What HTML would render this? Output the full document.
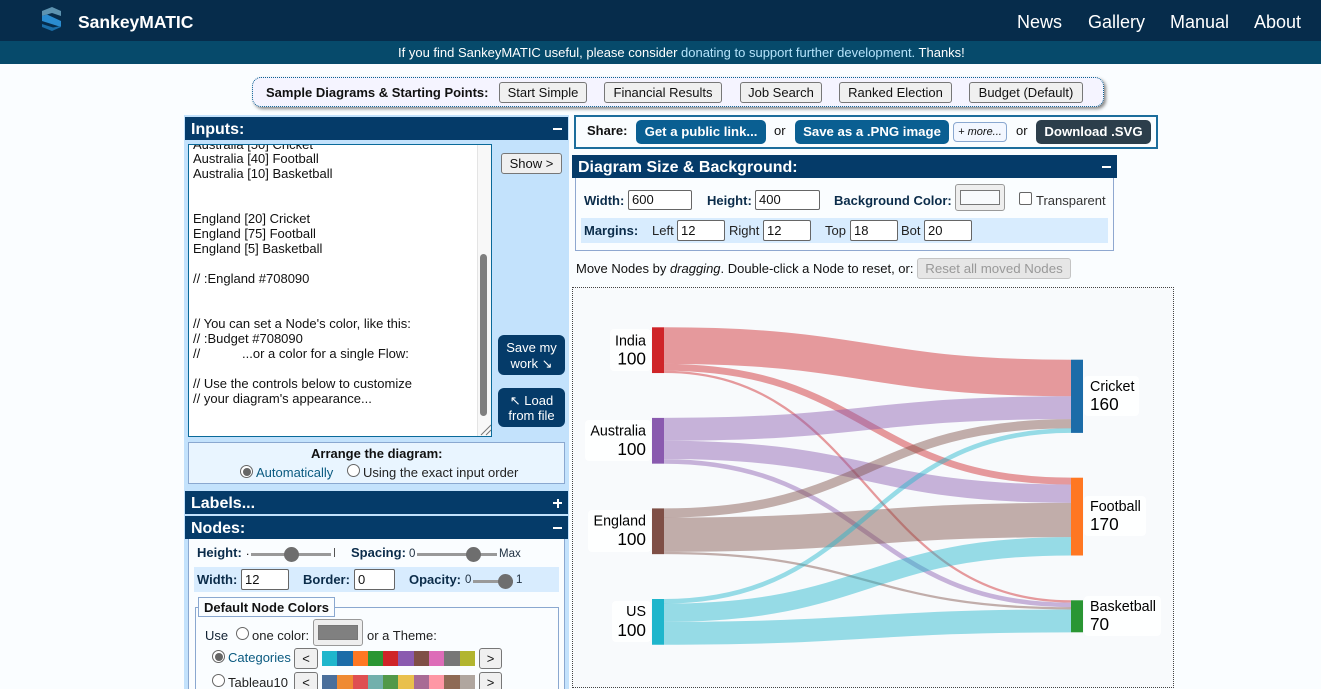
<!DOCTYPE html>
<html><head><meta charset="utf-8"><title>SankeyMATIC</title>
<style>
*{box-sizing:border-box}
html,body{margin:0;padding:0;height:689px;overflow:hidden}
body{width:1321px;background:#fafdff;font-family:"Liberation Sans",Arial,sans-serif;font-size:13px;color:#111}
#w{position:relative;width:1321px;height:689px;overflow:hidden}
.a{position:absolute}
.t{position:absolute;white-space:nowrap;line-height:16px;height:16px}
.b{font-weight:bold}
.n{color:#0b2c4a;font-weight:bold}
.btn{position:absolute;background:#f0f0f0;border:1px solid #777;border-radius:3px;text-align:center;color:#111;font-size:13px;white-space:nowrap}
.inp{position:absolute;background:#fff;border:1px solid #666;border-radius:2px;padding-left:3px;font-size:13px;color:#111;height:21px;line-height:19px}
.hd{position:absolute;background:#053b69;color:#fff;font-weight:bold;font-size:16px;line-height:25px;padding-left:6px;height:23px}
.hd i{position:absolute;right:6px;top:11px;width:9px;height:2px;background:#fff}
.blue{position:absolute;background:#0a5f92;color:#fff;font-weight:bold;font-size:13.2px;text-align:center;border-radius:5px;height:24px;line-height:23px;white-space:nowrap}
.radio{position:absolute;width:13px;height:13px;border-radius:50%;background:#fff;border:1px solid #666}
.radio.on:after{content:"";position:absolute;left:1.5px;top:1.5px;width:8px;height:8px;border-radius:50%;background:#666}
.tr{position:absolute;height:3px;background:#999}
.th{position:absolute;width:15px;height:15px;border-radius:50%;background:#6e6e6e}
.sw{position:absolute;width:153px;height:15px;display:flex}
.sw b{flex:1;display:block}
.ta{position:absolute;left:4px;white-space:pre;line-height:15px;height:15px;color:#111}
</style></head><body><div id="w">

<div class="a" style="left:0;top:0;width:1321px;height:41px;background:#062c4b"></div>
<svg class="a" style="left:0;top:0" width="80" height="40">
<polygon points="42,11 52,7 61,11 61,16 52,13 42,16" fill="#5d93b0"/>
<polygon points="42,16 47,14.5 61,21 61,27 42,21" fill="#2a8cd0"/>
<polygon points="42,24 53,27.5 61,26 61,27 52,31 42,27" fill="#1a6ea8"/>
</svg>
<div class="t b" style="left:78px;top:12px;font-size:17.5px;line-height:20px;height:20px;color:#fff">SankeyMATIC</div>
<div class="t" style="left:1017px;top:12px;font-size:18px;line-height:20px;height:20px;color:#fff">News</div>
<div class="t" style="left:1088px;top:12px;font-size:18px;line-height:20px;height:20px;color:#fff">Gallery</div>
<div class="t" style="left:1170px;top:12px;font-size:18px;line-height:20px;height:20px;color:#fff">Manual</div>
<div class="t" style="left:1254px;top:12px;font-size:18px;line-height:20px;height:20px;color:#fff">About</div>

<div class="a" style="left:0;top:41px;width:1321px;height:23px;background:#064a6b"></div>
<div class="t" style="left:398px;top:45px;color:#fff;font-size:13px">If you find SankeyMATIC useful, please consider <span style="color:#b5e3fb">donating to support further development.</span> Thanks!</div>

<div class="a" style="left:252px;top:77px;width:852px;height:30px;background:#f5f4ff;border:1px dotted #0a5f92;border-radius:9px;box-shadow:2px 2px 3px #888"></div>
<div class="t b" style="left:266px;top:85px">Sample Diagrams &amp; Starting Points:</div>
<div class="btn" style="left:499px;top:82px;width:88px;height:21px;line-height:19px">Start Simple</div>
<div class="btn" style="left:604px;top:82px;width:118px;height:21px;line-height:19px">Financial Results</div>
<div class="btn" style="left:740px;top:82px;width:82px;height:21px;line-height:19px">Job Search</div>
<div class="btn" style="left:839px;top:82px;width:113px;height:21px;line-height:19px">Ranked Election</div>
<div class="btn" style="left:969px;top:82px;width:114px;height:21px;line-height:19px">Budget (Default)</div>

<!-- LEFT PANEL -->
<div class="a" style="left:184px;top:115px;width:385px;height:574px;background:#c3e2fc"></div>
<div class="hd" style="left:185px;top:117px;width:383px">Inputs:<i></i></div>

<div class="a" style="left:188px;top:144px;width:304px;height:293px;background:#fff;border:1px solid #0a6a9a;overflow:hidden">
<div class="a" style="left:288px;top:0;width:15px;height:291px;background:#f8f8f8;border-left:1px solid #e4e4e4"></div>
<div class="a" style="left:291px;top:109px;width:7px;height:162px;background:#7f7f7f;border-radius:4px"></div>
<svg class="a" style="left:288px;top:276px" width="15" height="15"><path d="M4 14L14 4M9 14L14 9" stroke="#777" fill="none"/></svg>
<div class="ta" style="top:-8px">Australia [50] Cricket</div>
<div class="ta" style="top:6px">Australia [40] Football</div>
<div class="ta" style="top:21px">Australia [10] Basketball</div>
<div class="ta" style="top:66px">England [20] Cricket</div>
<div class="ta" style="top:81px">England [75] Football</div>
<div class="ta" style="top:96px">England [5] Basketball</div>
<div class="ta" style="top:126px">// :England #708090</div>
<div class="ta" style="top:171px">// You can set a Node's color, like this:</div>
<div class="ta" style="top:186px">// :Budget #708090</div>
<div class="ta" style="top:201px">//</div>
<div class="ta" style="top:201px;left:53px">...or a color for a single Flow:</div>
<div class="ta" style="top:231px">// Use the controls below to customize</div>
<div class="ta" style="top:246px">// your diagram's appearance...</div>
</div>

<div class="btn" style="left:501px;top:153px;width:61px;height:21px;line-height:20px">Show &gt;</div>
<div class="a" style="left:498px;top:335px;width:67px;height:40px;background:#053b69;border-radius:6px;color:#fff;text-align:center;line-height:16px;padding-top:5px">Save my<br>work ↘</div>
<div class="a" style="left:498px;top:388px;width:67px;height:39px;background:#053b69;border-radius:6px;color:#fff;text-align:center;line-height:15px;padding-top:5px">↖ Load<br>from file</div>

<div class="a" style="left:188px;top:442px;width:377px;height:42px;background:#e9f5ff;border:1px solid #8aa8d0"></div>
<div class="t b" style="left:311px;top:446px">Arrange the diagram:</div>
<div class="radio on" style="left:240px;top:465px"></div>
<div class="t" style="left:256px;top:465px;color:#0a5a80">Automatically</div>
<div class="radio" style="left:347px;top:464px"></div>
<div class="t" style="left:363px;top:465px;color:#222">Using the exact input order</div>

<div class="hd" style="left:185px;top:491px;width:383px">Labels...<i></i><i style="right:9.5px;top:7.5px;width:2px;height:9px"></i></div>
<div class="hd" style="left:185px;top:516px;width:383px">Nodes:<i></i></div>

<div class="a" style="left:188px;top:539px;width:377px;height:150px;background:#fafdff;border-left:1px solid #8aa8d0;border-right:1px solid #8aa8d0"></div>
<div class="t n" style="left:197px;top:545px">Height:</div>
<div class="t" style="left:246px;top:543px;font-size:12px">.</div>
<div class="tr" style="left:251px;top:553px;width:80px"></div>
<div class="th" style="left:284px;top:547px"></div>
<div class="a" style="left:334px;top:548px;width:1px;height:9px;background:#555"></div>
<div class="t n" style="left:351px;top:545px">Spacing:</div>
<div class="t" style="left:409px;top:546px;font-size:11.5px;color:#234">0</div>
<div class="tr" style="left:417px;top:553px;width:80px"></div>
<div class="th" style="left:466px;top:547px"></div>
<div class="t" style="left:499px;top:546px;font-size:11.5px;color:#234">Max</div>

<div class="a" style="left:194px;top:567px;width:365px;height:25px;background:#d8ecfe"></div>
<div class="t n" style="left:197px;top:572px">Width:</div>
<div class="inp" style="left:241px;top:569px;width:48px">12</div>
<div class="t n" style="left:303px;top:572px">Border:</div>
<div class="inp" style="left:354px;top:569px;width:41px">0</div>
<div class="t n" style="left:409px;top:572px">Opacity:</div>
<div class="t" style="left:465px;top:572px;font-size:11.5px;color:#234">0</div>
<div class="tr" style="left:473px;top:580px;width:40px"></div>
<div class="th" style="left:498px;top:574px"></div>
<div class="t" style="left:516px;top:572px;font-size:11.5px;color:#234">1</div>

<div class="a" style="left:195px;top:607px;width:364px;height:90px;border:1px solid #8aa8d0"></div>
<div class="a" style="left:198px;top:597px;width:137px;height:20px;border:1px solid #8aa8d0;background:#fafdff"></div>
<div class="t b" style="left:204px;top:600px;font-size:13px">Default Node Colors</div>
<div class="t" style="left:205px;top:628px;color:#123">Use</div>
<div class="radio" style="left:236px;top:627px"></div>
<div class="t" style="left:252px;top:628px;color:#222">one color:</div>
<div class="btn" style="left:313px;top:619px;width:50px;height:27px;background:#eee;border-color:#999"></div>
<div class="a" style="left:318px;top:625px;width:40px;height:15px;background:#808080;border:1px solid #777"></div>
<div class="t" style="left:367px;top:628px;color:#222">or a Theme:</div>

<div class="radio on" style="left:212px;top:650px"></div>
<div class="t" style="left:228px;top:650px;color:#0a5a80">Categories</div>
<div class="btn" style="left:294px;top:648px;width:24px;height:21px;line-height:19px">&lt;</div>
<div class="sw" style="left:322px;top:651px"><b style="background:#1fb6cc"></b><b style="background:#1c6ca8"></b><b style="background:#ff7722"></b><b style="background:#2a9633"></b><b style="background:#cf2428"></b><b style="background:#8a5aaf"></b><b style="background:#7f4f46"></b><b style="background:#dd6cb8"></b><b style="background:#777777"></b><b style="background:#b2b52f"></b></div>
<div class="btn" style="left:479px;top:648px;width:23px;height:21px;line-height:19px">&gt;</div>

<div class="radio" style="left:212px;top:674px"></div>
<div class="t" style="left:228px;top:675px;color:#222">Tableau10</div>
<div class="btn" style="left:294px;top:672px;width:24px;height:21px;line-height:19px">&lt;</div>
<div class="sw" style="left:322px;top:675px"><b style="background:#4a6f9b"></b><b style="background:#ef8a33"></b><b style="background:#df4f51"></b><b style="background:#72b0ac"></b><b style="background:#52994a"></b><b style="background:#e9c04d"></b><b style="background:#a86b95"></b><b style="background:#fe97a5"></b><b style="background:#8e6a55"></b><b style="background:#b0a69f"></b></div>
<div class="btn" style="left:479px;top:672px;width:23px;height:21px;line-height:19px">&gt;</div>

<!-- SHARE -->
<div class="a" style="left:574px;top:115px;width:584px;height:34px;border:2px solid #1c6d9c"></div>
<div class="t b" style="left:587px;top:123px">Share:</div>
<div class="blue" style="left:636px;top:120px;width:130px">Get a public link...</div>
<div class="t" style="left:774px;top:123px">or</div>
<div class="blue" style="left:795px;top:120px;width:154px">Save as a .PNG image</div>
<div class="a" style="left:953px;top:122px;width:54px;height:20px;background:#f3f7ff;border:1px solid #8aa8d0;border-radius:4px;font-size:11px;font-style:italic;text-align:center;line-height:19px;white-space:nowrap">+ more...</div>
<div class="t" style="left:1016px;top:123px">or</div>
<div class="blue" style="left:1036px;top:120px;width:115px;background:#2c3e4b">Download .SVG</div>

<div class="hd" style="left:572px;top:155px;width:545px">Diagram Size &amp; Background:<i></i></div>
<div class="a" style="left:575px;top:178px;width:539px;height:73px;border:1px solid #8fa8d0;border-top:0"></div>
<div class="t n" style="left:584px;top:193px">Width:</div>
<div class="inp" style="left:628px;top:190px;width:64px;height:20px;line-height:18px">600</div>
<div class="t n" style="left:707px;top:193px">Height:</div>
<div class="inp" style="left:755px;top:190px;width:65px;height:20px;line-height:18px">400</div>
<div class="t n" style="left:834px;top:193px">Background Color:</div>
<div class="btn" style="left:955px;top:184px;width:50px;height:27px;background:#eee;border-color:#999"></div>
<div class="a" style="left:960px;top:190px;width:40px;height:15px;background:#f8fafc;border:1px solid #777"></div>
<div class="a" style="left:1019px;top:192px;width:13px;height:13px;background:#fff;border:1px solid #666;border-radius:2px"></div>
<div class="t" style="left:1036px;top:193px;color:#333">Transparent</div>

<div class="a" style="left:581px;top:218px;width:527px;height:25px;background:#d8ecfe"></div>
<div class="t n" style="left:584px;top:223px">Margins:</div>
<div class="t" style="left:652px;top:223px;color:#222">Left</div>
<div class="inp" style="left:677px;top:220px;width:48px">12</div>
<div class="t" style="left:729px;top:223px;color:#222">Right</div>
<div class="inp" style="left:763px;top:220px;width:48px">12</div>
<div class="t" style="left:825px;top:223px;color:#222">Top</div>
<div class="inp" style="left:850px;top:220px;width:48px">18</div>
<div class="t" style="left:901px;top:223px;color:#222">Bot</div>
<div class="inp" style="left:924px;top:220px;width:48px">20</div>

<div class="t" style="left:576px;top:261px;font-size:13px">Move Nodes by <i>dragging</i>. Double-click a Node to reset, or:</div>
<div class="btn" style="left:917px;top:258px;width:154px;height:21px;line-height:19px;background:#e6e6e6;color:#999;border-color:#c4c4c4;font-size:13.3px">Reset all moved Nodes</div>

<!-- CHART -->
<div class="a" style="left:572px;top:287px;width:602px;height:401px;background:#f8fafc;border:1px dotted #444"></div>
<svg class="a" style="left:0;top:0" width="1321" height="689" font-family="Liberation Sans, Arial, sans-serif">
<g fill="none" stroke-opacity=".45">
<g stroke="#cf2428">
<path d="M664 345.6C867.5 345.6 867.5 378 1071 378" stroke-width="36.6"/>
<path d="M664 367.3C867.5 367.3 867.5 481.1 1071 481.1" stroke-width="6.86"/>
<path d="M664 371.9C867.5 371.9 867.5 601.4 1071 601.4" stroke-width="2.29"/>
</g>
<g stroke="#8a5aaf">
<path d="M664 429.3C867.5 429.3 867.5 407.7 1071 407.7" stroke-width="22.9"/>
<path d="M664 449.9C867.5 449.9 867.5 493.7 1071 493.7" stroke-width="18.3"/>
<path d="M664 461.4C867.5 461.4 867.5 604.9 1071 604.9" stroke-width="4.58"/>
</g>
<g stroke="#7f4f46">
<path d="M664 513C867.5 513 867.5 423.75 1071 423.75" stroke-width="9.15"/>
<path d="M664 534.7C867.5 534.7 867.5 520 1071 520" stroke-width="34.3"/>
<path d="M664 553C867.5 553 867.5 608.3 1071 608.3" stroke-width="2.29"/>
</g>
<g stroke="#1fb6cc">
<path d="M664 601.3C867.5 601.3 867.5 430.6 1071 430.6" stroke-width="4.58"/>
<path d="M664 612.7C867.5 612.7 867.5 546.3 1071 546.3" stroke-width="18.3"/>
<path d="M664 633.3C867.5 633.3 867.5 620.9 1071 620.9" stroke-width="22.9"/>
</g>
</g>
<rect x="652" y="327.3" width="12" height="45.75" fill="#cf2428"/>
<rect x="652" y="417.9" width="12" height="45.75" fill="#8a5aaf"/>
<rect x="652" y="508.4" width="12" height="45.75" fill="#7f4f46"/>
<rect x="652" y="599" width="12" height="45.75" fill="#1fb6cc"/>
<rect x="1071" y="359.7" width="12" height="73.2" fill="#1c6ca8"/>
<rect x="1071" y="477.7" width="12" height="77.8" fill="#ff7722"/>
<rect x="1071" y="600.3" width="12" height="32" fill="#2a9633"/>
<g fill="#fff" fill-opacity=".85">
<rect x="610" y="329" width="41" height="42" rx="4"/>
<rect x="585" y="420" width="66" height="41" rx="4"/>
<rect x="588" y="510" width="63" height="42" rx="4"/>
<rect x="612" y="601" width="39" height="41" rx="4"/>
<rect x="1084" y="376" width="55" height="40" rx="4"/>
<rect x="1084" y="496" width="62" height="40" rx="4"/>
<rect x="1084" y="596" width="77" height="40" rx="4"/>
</g>
<g fill="#000" text-anchor="end">
<text x="646" y="345.3" font-size="14.3">India</text><text x="646" y="364.3" font-size="17.2">100</text>
<text x="646" y="435.3" font-size="14.3">Australia</text><text x="646" y="455" font-size="17.2">100</text>
<text x="646" y="525.7" font-size="14.3">England</text><text x="646" y="545" font-size="17.2">100</text>
<text x="646" y="616" font-size="14.3">US</text><text x="646" y="636" font-size="17.2">100</text>
</g>
<g fill="#000">
<text x="1090" y="391" font-size="14.3">Cricket</text><text x="1090" y="410" font-size="17.2">160</text>
<text x="1090" y="511" font-size="14.3">Football</text><text x="1090" y="530" font-size="17.2">170</text>
<text x="1090" y="611" font-size="14.3">Basketball</text><text x="1090" y="630" font-size="17.2">70</text>
</g>
</svg>
</div></body></html>
